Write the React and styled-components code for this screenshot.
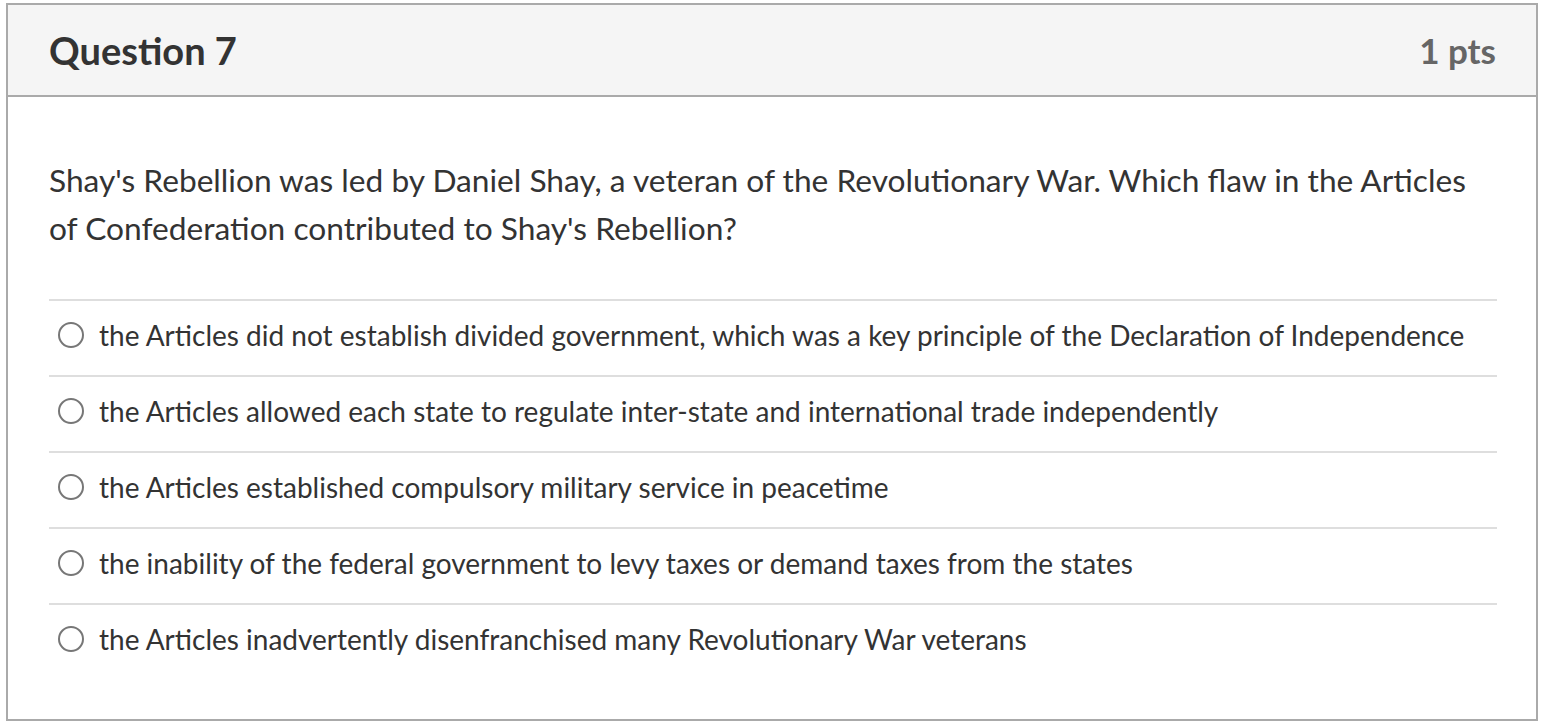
import React from 'react';
import styled, { createGlobalStyle } from 'styled-components';

const GlobalStyle = createGlobalStyle`
  body {
    margin: 0;
    background: #fff;
    font-family: Lato, "Noto Sans", sans-serif;
    color: #333;
  }
`;

const Card = styled.div`
  box-sizing: border-box;
  margin: 3px 0 0 6px;
  width: 1532px;
  height: 718px;
  border: 2px solid #aaa;
`;

const Header = styled.div`
  display: flex;
  align-items: center;
  justify-content: space-between;
  height: 90px;
  padding: 0 40px 0 41px;
  background: #f5f5f5;
  border-bottom: 2px solid #aaa;
`;

const Title = styled.h2`
  margin: 0;
  font-size: 38px;
  font-weight: 700;
  color: #333;
`;

const Points = styled.span`
  font-size: 35px;
  font-weight: 700;
  color: #666;
`;

const Body = styled.div`
  padding: 59px 39px 0 41px;
`;

const QuestionText = styled.p`
  margin: 0 0 47px;
  font-size: 31.7px;
  line-height: 48px;
`;

const Answers = styled.ul`
  list-style: none;
  margin: 0;
  padding: 0;
`;

const Answer = styled.li`
  box-sizing: border-box;
  display: flex;
  align-items: center;
  height: 76px;
  padding: 0 0 6px 9px;
  border-top: 2px solid #dedede;
  font-size: 28px;
`;

const Radio = styled.span`
  box-sizing: border-box;
  flex: none;
  width: 26px;
  height: 26px;
  border: 2px solid #777;
  border-radius: 50%;
  margin-right: 15px;
`;

const answers = [
  'the Articles did not establish divided government, which was a key principle of the Declaration of Independence',
  'the Articles allowed each state to regulate inter-state and international trade independently',
  'the Articles established compulsory military service in peacetime',
  'the inability of the federal government to levy taxes or demand taxes from the states',
  'the Articles inadvertently disenfranchised many Revolutionary War veterans',
];

const App = () => {
  return (
    <>
      <GlobalStyle />
      <Card>
        <Header>
          <Title>Question 7</Title>
          <Points>1 pts</Points>
        </Header>
        <Body>
          <QuestionText>
            Shay's Rebellion was led by Daniel Shay, a veteran of the Revolutionary War. Which flaw in the Articles
            of Confederation contributed to Shay's Rebellion?
          </QuestionText>
          <Answers>
            {answers.map((text, index) => (
              <Answer key={index}>
                <Radio />
                {text}
              </Answer>
            ))}
          </Answers>
        </Body>
      </Card>
    </>
  );
};

export default App;
